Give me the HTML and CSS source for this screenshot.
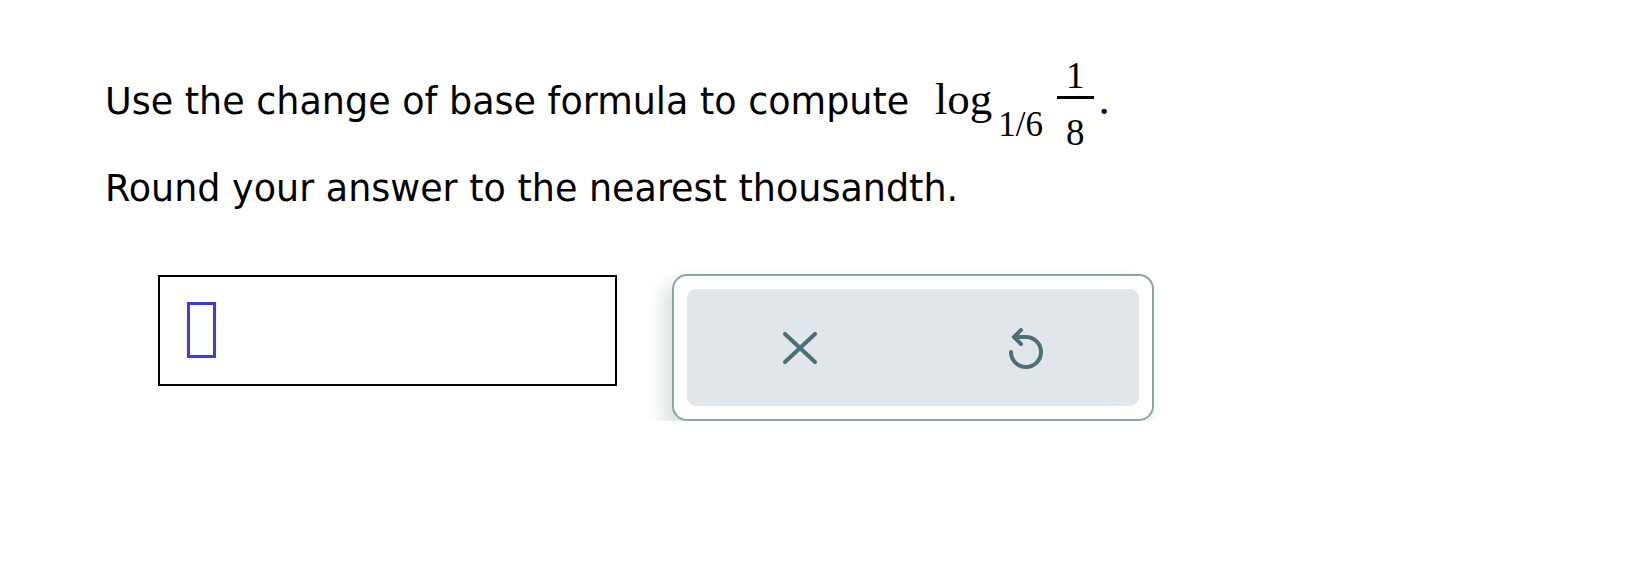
FILE: index.html
```html
<!DOCTYPE html>
<html lang="en">

<head>
    <meta charset="UTF-8">
    <meta name="viewport" content="width=device-width, initial-scale=1.0">
    <title>Change of base</title>
    <link rel="stylesheet" href="styles.css">
</head>

<body>
    <div class="question">
        <p class="line line-math">Use the change of base formula to compute <span class="math"><span class="fn">log</span><span class="base">1/6</span><span class="frac"><span class="num">1</span><span class="den">8</span></span><span class="dot">.</span></span></p>
        <p class="line">Round your answer to the nearest thousandth.</p>
    </div>

    <div class="answer">
        <div class="field"><span class="cursor"></span></div>

        <div class="tools">
            <div class="tools-inner">
                <button class="tool" type="button" aria-label="Clear">
                    <svg width="34" height="32" viewBox="0 0 34 32">
                        <path d="M2 2 L32 30 M32 2 L2 30" />
                    </svg>
                </button>
                <button class="tool" type="button" aria-label="Undo">
                    <svg width="40" height="44" viewBox="0 0 40 44">
                        <path d="M15 4 L8 11 L15 18 M8 11 H20 A15 15 0 1 1 5 26" />
                    </svg>
                </button>
            </div>
        </div>
    </div>
</body>

</html>
```

FILE: styles.css
```css
body {
    margin: 0;
    background: #fff;
    color: #000;
    font-family: "DejaVu Sans", Verdana, sans-serif;
}

/* 문제 텍스트 */
.question {
    padding-left: 105px;
    padding-top: 55px;
}

.line {
    margin: 0;
    font-size: 36.5px;
    line-height: 44px;
    white-space: nowrap;
}

.line-math {
    margin-bottom: 14px;
}

/* 수식 부분 */
.math {
    font-family: "Liberation Serif", "Times New Roman", serif;
}

.fn {
    font-size: 45px;
    margin-left: 14px;
}

.base {
    font-size: 35px;
    vertical-align: -22px;
    margin-left: 6px;
}

.frac {
    display: inline-block;
    vertical-align: -31px;
    margin-left: 14px;
    text-align: center;
    font-size: 37px;
}

.num {
    display: block;
    line-height: 41px;
    padding: 0 9px;
}

.den {
    display: block;
    line-height: 41px;
    padding-top: 13px;
    border-top: 3px solid #000;
}

.dot {
    font-size: 45px;
    margin-left: 5px;
}

/* 입력 영역 */
.answer {
    display: flex;
    align-items: flex-start;
    gap: 55px;
    margin-top: 64px;
    padding-left: 158px;
}

.field {
    box-sizing: border-box;
    width: 459px;
    height: 111px;
    border: 2px solid #000;
    padding: 25px 0 0 27px;
}

.cursor {
    display: block;
    box-sizing: border-box;
    width: 29px;
    height: 56px;
    border: 3px solid #3b3bf2;
}

.tools {
    box-sizing: border-box;
    width: 482px;
    height: 147px;
    margin-top: -1px;
    padding: 13px;
    border: 2px solid #8fa2a8;
    border-radius: 15px;
    background: #fff;
    box-shadow: -8px 10px 18px rgba(40, 70, 80, 0.18);
}

.tools-inner {
    display: flex;
    height: 100%;
    border-radius: 9px;
    background: #e0e6e9;
    overflow: hidden;
}

.tool {
    flex: 1;
    display: flex;
    align-items: center;
    justify-content: center;
    margin: 0;
    padding: 0;
    border: 0;
    background: transparent;
}

.tool svg {
    fill: none;
    stroke: #4d6f7a;
    stroke-width: 4;
    stroke-linecap: round;
    stroke-linejoin: round;
}
```
